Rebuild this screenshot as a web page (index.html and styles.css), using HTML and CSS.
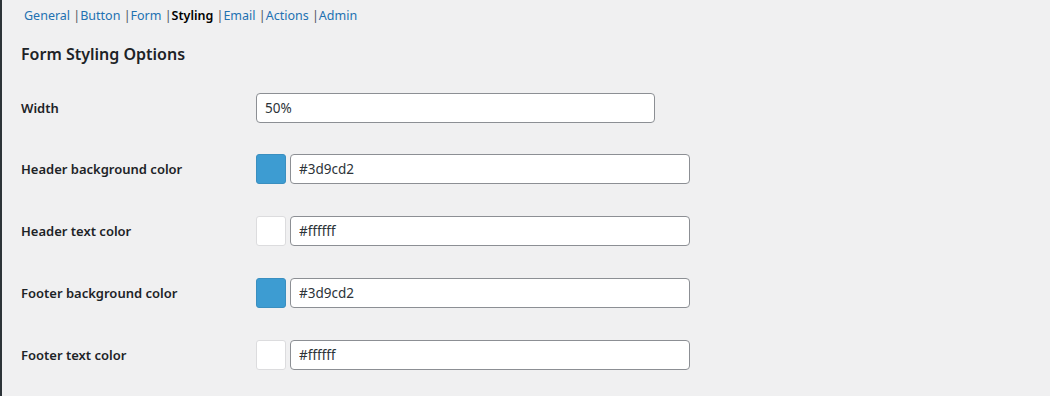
FILE: index.html
```html
<!DOCTYPE html>
<html>
<head>
<meta charset="utf-8">
<link rel="stylesheet" href="styles.css">
</head>
<body>
<div class="wrap">
  <ul class="tabs">
    <li><a href="#">General</a> |</li>
    <li><a href="#">Button</a> |</li>
    <li><a href="#">Form</a> |</li>
    <li><a href="#" class="current">Styling</a> |</li>
    <li><a href="#">Email</a> |</li>
    <li><a href="#">Actions</a> |</li>
    <li><a href="#">Admin</a></li>
  </ul>
  <h2 class="title">Form Styling Options</h2>
  <div class="form">
    <div class="row first">
      <div class="label">Width</div>
      <div class="field"><input class="text wide" type="text" value="50%"></div>
    </div>
    <div class="row">
      <div class="label">Header background color</div>
      <div class="field"><span class="swatch blue"></span><input class="text" type="text" value="#3d9cd2"></div>
    </div>
    <div class="row">
      <div class="label">Header text color</div>
      <div class="field"><span class="swatch white"></span><input class="text" type="text" value="#ffffff"></div>
    </div>
    <div class="row">
      <div class="label">Footer background color</div>
      <div class="field"><span class="swatch blue"></span><input class="text" type="text" value="#3d9cd2"></div>
    </div>
    <div class="row">
      <div class="label">Footer text color</div>
      <div class="field"><span class="swatch white"></span><input class="text" type="text" value="#ffffff"></div>
    </div>
  </div>
</div>
</body>
</html>
```

FILE: styles.css
```css
html, body {
  margin: 0;
  padding: 0;
  height: 100%;
}
body {
  background: #f0f0f1;
  font-family: "Noto Sans", "Open Sans", sans-serif;
  color: #1d2327;
  border-left: 2px solid #2c3338;
  box-sizing: border-box;
}
.wrap {
  padding: 3px 0 0 19px;
}
.tabs {
  list-style: none;
  margin: 0 0 0 3px;
  padding: 0;
  display: flex;
  font-size: 12.5px;
  line-height: 26px;
  color: #50575e;
}
.tabs li {
  white-space: pre;
}
.tabs a {
  color: #2271b1;
  text-decoration: none;
}
.tabs a.current {
  color: #000;
  font-weight: 600;
}
.title {
  font-size: 16px;
  font-weight: 600;
  line-height: 22px;
  margin: 14px 0 0 0;
  color: #1d2327;
}
.form {
  margin-top: 28px;
}
.row {
  display: grid;
  grid-template-columns: 235px 1fr;
  align-items: center;
  height: 30px;
  margin-top: 32px;
}
.row.first {
  margin-top: 0;
}
.row.first + .row {
  margin-top: 31px;
}
.label {
  font-size: 13px;
  font-weight: 600;
  color: #1d2327;
}
.field {
  display: flex;
  align-items: center;
  gap: 4px;
}
.text {
  box-sizing: border-box;
  width: 400px;
  height: 30px;
  border: 1px solid #8c8f94;
  border-radius: 4px;
  background: #fff;
  padding: 0 8px;
  font-family: "Noto Sans", "Open Sans", sans-serif;
  font-size: 13.5px;
  color: #2c3338;
  outline: none;
}
.text.wide {
  width: 399px;
}
.swatch {
  box-sizing: border-box;
  width: 30px;
  height: 30px;
  border-radius: 3px;
  display: block;
}
.swatch.blue {
  background: #3d9cd2;
  border: 1px solid #3a8fc0;
}
.swatch.white {
  background: #fff;
  border: 1px solid #dcdcde;
}
```
